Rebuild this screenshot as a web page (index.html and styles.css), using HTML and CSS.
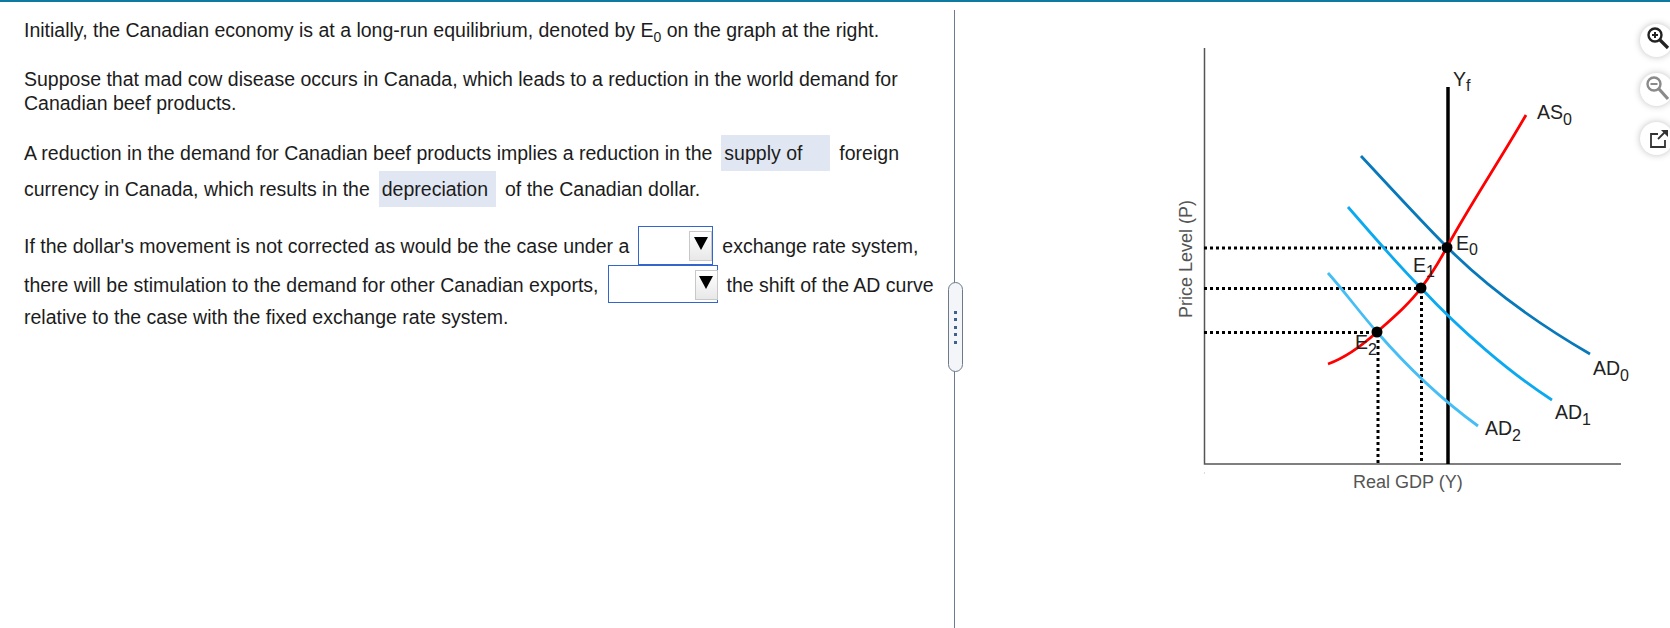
FILE: index.html
```html
<!DOCTYPE html>
<html lang="en">
<head>
<meta charset="utf-8">
<title>Canadian economy question</title>
<link rel="stylesheet" href="styles.css">
</head>
<body>
<div class="topbar"></div>
<main class="workspace">
  <section class="question">
    <p class="para first">Initially, the Canadian economy is at a long-run equilibrium, denoted by E<sub>0</sub> on the graph at the right.</p>
    <p class="para second">Suppose that mad cow disease occurs in Canada, which leads to a reduction in the world demand for Canadian beef products.</p>
    <div class="para answers">
      <div class="row row-h"><span>A reduction in the demand for Canadian beef products implies a reduction in the</span><span class="chosen wide">supply of</span><span>foreign</span></div>
      <div class="row row-h"><span>currency in Canada, which results in the</span><span class="chosen">depreciation</span><span>of the Canadian dollar.</span></div>
    </div>
    <div class="para blanks">
      <div class="row row-a"><span>If the dollar's movement is not corrected as would be the case under a</span><span class="drop drop-a"><span class="arrow"></span></span><span>exchange rate system,</span></div>
      <div class="row row-b"><span>there will be stimulation to the demand for other Canadian exports,</span><span class="drop drop-b"><span class="arrow"></span></span><span>the shift of the AD curve</span></div>
      <div class="row row-c"><span>relative to the case with the fixed exchange rate system.</span></div>
    </div>
  </section>
  <div class="divider">
    <div class="handle"><span class="dots"></span></div>
  </div>
  <section class="figure">
    <svg class="graph" width="715" height="618" viewBox="955 10 715 618" xmlns="http://www.w3.org/2000/svg">
      <path class="axis" d="M1204.500 48V464H1621"/>
      <path class="speck" d="M1204 473H1205"/>
      <path class="dotted" d="M1204 248H1446M1204 288.500H1420M1204 332.500H1376M1378 334V464M1421.500 290V464"/>
      <path class="yf" d="M1448 87V464"/>
      <path class="ad0" d="M1361 156C1390 187 1420 220 1447 247C1490 290 1540 325 1590 354"/>
      <path class="ad1" d="M1348 207C1375 238 1398 265 1421 288C1460 330 1510 373 1552 400"/>
      <path class="ad2" d="M1328 273C1345 292 1360 313 1377 332C1410 370 1445 402 1478 426"/>
      <path class="as" d="M1328 364C1350 356 1366 342 1377 332C1395 316 1410 303 1421 288C1431 275 1439 262 1447 247C1470 205 1500 160 1526 115"/>
      <circle cx="1447" cy="247.500" r="5.500"/>
      <circle cx="1421" cy="288" r="5.500"/>
      <circle cx="1377" cy="332" r="5.500"/>
      <text class="lbl" x="1453" y="86">Y<tspan class="sb" dy="5">f</tspan></text>
      <text class="lbl" x="1537" y="119">AS<tspan class="sb" dy="6">0</tspan></text>
      <text class="lbl" x="1456" y="250">E<tspan class="sb" dy="5">0</tspan></text>
      <text class="lbl" x="1413" y="272">E<tspan class="sb" dy="5">1</tspan></text>
      <text class="lbl" x="1355" y="349">E<tspan class="sb" dy="6">2</tspan></text>
      <text class="lbl" x="1593" y="375">AD<tspan class="sb" dy="6">0</tspan></text>
      <text class="lbl" x="1555" y="419">AD<tspan class="sb" dy="6">1</tspan></text>
      <text class="lbl" x="1485" y="435">AD<tspan class="sb" dy="6">2</tspan></text>
      <text class="axis-lbl" x="1353" y="488">Real GDP (Y)</text>
      <text class="axis-lbl" transform="translate(1192 318) rotate(-90)">Price Level (P)</text>
    </svg>
    <div class="tools">
      <button class="tool" type="button" aria-label="Zoom in">
        <svg width="33" height="33" viewBox="0 0 33 33"><circle class="lens dark" cx="15" cy="11" r="6.500"/><path class="plus dark" d="M12 11H18M15 8V14"/><path class="grip dark" d="M20 16L28 24"/></svg>
      </button>
      <button class="tool" type="button" aria-label="Zoom out">
        <svg width="33" height="33" viewBox="0 0 33 33"><circle class="lens soft" cx="14" cy="11" r="6.500"/><path class="plus soft" d="M10.500 11H17.500"/><path class="grip soft" d="M19 16L28 26"/></svg>
      </button>
      <button class="tool" type="button" aria-label="Open in new window">
        <svg width="33" height="33" viewBox="0 0 33 33"><path class="popout" d="M18 12H11V25H25V18"/><path class="popout" d="M18 17L25 10"/><path class="tip" d="M21 8H28V15Z"/></svg>
      </button>
    </div>
  </section>
</main>
</body>
</html>
```
FILE: styles.css
```css
* { box-sizing: border-box; }
html, body { margin: 0; height: 100%; overflow: hidden; background: #fff; }
body { font-family: "Liberation Sans", Arial, sans-serif; font-size: 19.5px; color: #1c1c1c; }
.topbar { height: 2px; background: #0e7a9f; }
.workspace { display: flex; height: 626px; position: relative; }
.question { width: 954px; padding: 0 0 0 24px; }
.para { margin: 0; line-height: 24px; }
.first { padding-top: 16px; }
.second { padding-top: 25px; }
.answers { padding-top: 20px; }
.para sub { font-size: 14px; line-height: 0; }
.blanks { padding-top: 19px; }
.row { white-space: nowrap; display: flex; align-items: center; gap: 9px; }
.row-h { height: 36px; }
.row-a { height: 39px; }
.row-b { height: 38px; padding-top: 2px; }
.row-c { height: 28px; }
.chosen { height: 36px; line-height: 36px; padding: 0 8px 0 3px; background: #e1e7f2; }
.wide { width: 109px; }
.drop { display: block; position: relative; flex: none; border: 1px solid #3366cc; background: #fff; }
.drop-a { width: 75px; height: 39px; }
.drop-b { width: 110px; height: 38px; margin-top: -2px; }
.arrow { position: absolute; right: 0; top: 4px; width: 23px; height: 30px; border: 1px solid #c8c8c8; background: linear-gradient(#fff, #e8e8e8); display: flex; justify-content: center; padding-top: 5px; }
.drop-b .arrow { right: -1px; }
.arrow::before { content: ""; width: 0; height: 0; border-left: 7.500px solid transparent; border-right: 7.500px solid transparent; border-top: 13px solid #000; }
.divider { width: 1px; margin-top: 8px; background: #6b7b8c; position: relative; }
.handle { position: absolute; left: -6px; top: 272px; width: 15px; height: 90px; border: 1px solid #6b7b8c; border-radius: 8px; background: #f3f5f8; display: flex; align-items: center; justify-content: center; }
.dots { width: 3px; height: 33px; background: repeating-linear-gradient(#3f5f8f 0 3px, transparent 3px 7.500px); }
.figure { flex: 1; position: relative; padding-top: 8px; }
.graph { display: block; }
.axis { fill: none; stroke: #555; stroke-width: 1.500; }
.speck { fill: none; stroke: #bbb; stroke-width: 1; }
.dotted { fill: none; stroke: #000; stroke-width: 3; stroke-dasharray: 3 3; }
.yf { fill: none; stroke: #000; stroke-width: 3.500; }
.ad0 { fill: none; stroke: #0779ba; stroke-width: 2.800; }
.ad1 { fill: none; stroke: #0aa9f0; stroke-width: 2.800; }
.ad2 { fill: none; stroke: #45bdf5; stroke-width: 2.800; }
.as { fill: none; stroke: #f00; stroke-width: 2.800; }
.graph circle { fill: #000; }
.lbl { font-size: 19.500px; fill: #222; }
.sb { font-size: 16px; }
.axis-lbl { font-size: 18px; fill: #555; }
.tools { position: absolute; top: 22px; right: -3px; display: flex; flex-direction: column; gap: 16px; }
.tool { width: 33px; height: 33px; padding: 0; border: 0; border-radius: 50%; background: #fff; box-shadow: 0 0 7px rgba(0,0,0,.25); display: flex; align-items: center; justify-content: center; }
.tool svg { display: block; overflow: visible; }
.lens { fill: none; stroke-width: 2.400; }
.plus { fill: none; stroke-width: 2; }
.grip { fill: none; stroke-width: 3.200; }
.dark { stroke: #222; }
.soft { stroke: #8a8a8a; }
.popout { fill: none; stroke: #333; stroke-width: 1.800; }
.tip { fill: #333; }
```
